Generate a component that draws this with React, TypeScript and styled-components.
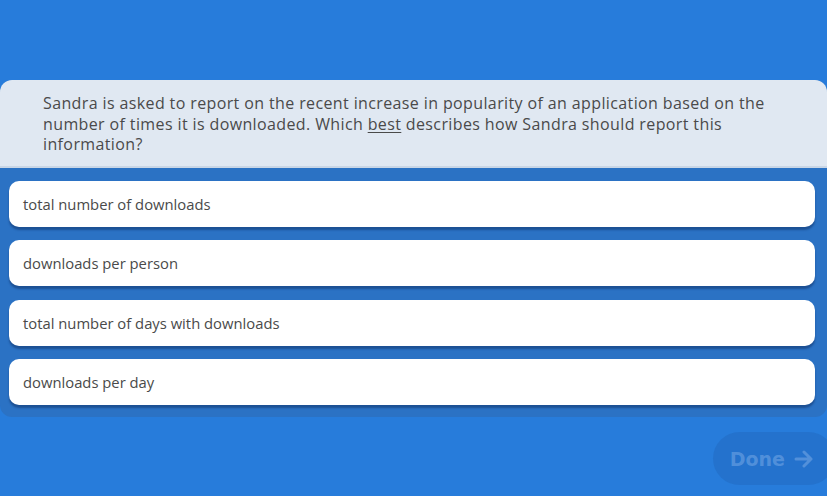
import React from 'react';
import styled, { createGlobalStyle } from 'styled-components';

const GlobalStyle = createGlobalStyle`
  html, body {
    margin: 0;
    padding: 0;
    background: #277cdb;
    overflow: hidden;
  }
`;

const Page = styled.div`
  width: 827px;
  height: 496px;
  padding-top: 80px;
  box-sizing: border-box;
  font-family: "Open Sans", "Noto Sans", sans-serif;
  overflow: hidden;
`;

const Panel = styled.section`
  border-radius: 12px;
  background: #2b72c4;
  overflow: hidden;
`;

const Question = styled.div`
  background: #e0e8f2;
  border-bottom: 2px solid #c9d6e6;
  padding: 13px 20px 11px 43px;
  color: #4a4a4a;
  font-size: 16px;
  letter-spacing: 0.38px;
  line-height: 20.5px;
  white-space: nowrap;
`;

const Emph = styled.span`
  text-decoration: underline;
  text-underline-offset: 2px;
`;

const Options = styled.div`
  display: flex;
  flex-direction: column;
  gap: 13.5px;
  padding: 13px 12px 12px 9px;
`;

const Option = styled.button`
  display: flex;
  align-items: center;
  height: 46px;
  padding: 0 14px;
  border: none;
  border-radius: 10px;
  background: #ffffff;
  box-shadow: 0 3px 2px rgba(10, 40, 90, 0.45);
  color: #4a4a4a;
  font-family: inherit;
  font-size: 14.8px;
  text-align: left;
`;

const Footer = styled.div`
  display: flex;
  justify-content: flex-end;
  margin-top: 15px;
  margin-right: -8px;
`;

const DoneButton = styled.button`
  display: flex;
  align-items: center;
  gap: 9px;
  height: 53px;
  padding: 0 22px 0 17px;
  border: none;
  border-radius: 27px;
  background: rgba(30, 90, 170, 0.28);
  color: rgba(120, 170, 230, 0.55);
  font-family: "DejaVu Sans", sans-serif;
  font-weight: bold;
  font-size: 19px;
`;

const options = [
  'total number of downloads',
  'downloads per person',
  'total number of days with downloads',
  'downloads per day',
];

const App = () => {
  return (
    <Page>
      <GlobalStyle />
      <Panel>
        <Question>
          Sandra is asked to report on the recent increase in popularity of an application based on the
          <br />
          number of times it is downloaded. Which <Emph>best</Emph> describes how Sandra should report this
          <br />
          information?
        </Question>
        <Options>
          {options.map((o) => (
            <Option key={o}>{o}</Option>
          ))}
        </Options>
      </Panel>
      <Footer>
        <DoneButton>
          Done
          <svg width="19" height="18" viewBox="0 0 19 18" fill="none" stroke="currentColor" strokeWidth="3" strokeLinecap="round" strokeLinejoin="round">
            <path d="M2 9h15M10 2l7 7-7 7" />
          </svg>
        </DoneButton>
      </Footer>
    </Page>
  );
};

export default App;
